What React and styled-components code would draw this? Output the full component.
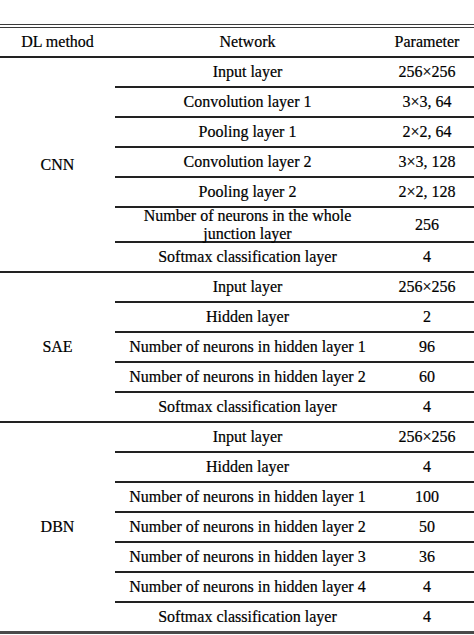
import React from 'react'
import styled, { createGlobalStyle } from 'styled-components'

const GlobalStyle = createGlobalStyle`
  body {
    margin: 0;
    background: #fff;
    font-family: "Liberation Serif", "Times New Roman", serif;
    color: #000;
  }
`

const Table = styled.div`
  width: 474px;
  margin-top: 24px;
  border-top: 4px double #3a3a3a;
  font-size: 16px;
  -webkit-text-stroke: 0.2px #000;
`

const HeaderRow = styled.div`
  display: flex;
  height: 28px;
  border-bottom: 2px solid #222;
`

const Cell = styled.div`
  display: flex;
  align-items: center;
  justify-content: center;
  text-align: center;
  line-height: 18px;
  width: ${props => props.w}px;
  flex-shrink: 0;
`

const Section = styled.div`
  display: flex;
  border-bottom: ${props => props.last ? '3px solid #4a4a4a' : '2px solid #222'};
`

const Method = styled(Cell)`
  width: 115px;
`

const Rows = styled.div`
  display: flex;
  flex-direction: column;
  flex: 1;
`

const Row = styled.div`
  display: flex;
  height: ${props => props.tall ? 33 : 28}px;
  border-bottom: 2px solid #222;
  &:last-child {
    border-bottom: none;
  }
`

const sections = [
  {
    name: 'CNN',
    rows: [
      ['Input layer', '256×256'],
      ['Convolution layer 1', '3×3, 64'],
      ['Pooling layer 1', '2×2, 64'],
      ['Convolution layer 2', '3×3, 128'],
      ['Pooling layer 2', '2×2, 128'],
      ['Number of neurons in the whole junction layer', '256', true],
      ['Softmax classification layer', '4'],
    ],
  },
  {
    name: 'SAE',
    rows: [
      ['Input layer', '256×256'],
      ['Hidden layer', '2'],
      ['Number of neurons in hidden layer 1', '96'],
      ['Number of neurons in hidden layer 2', '60'],
      ['Softmax classification layer', '4'],
    ],
  },
  {
    name: 'DBN',
    rows: [
      ['Input layer', '256×256'],
      ['Hidden layer', '4'],
      ['Number of neurons in hidden layer 1', '100'],
      ['Number of neurons in hidden layer 2', '50'],
      ['Number of neurons in hidden layer 3', '36'],
      ['Number of neurons in hidden layer 4', '4'],
      ['Softmax classification layer', '4'],
    ],
  },
]

function App() {
  return (
    <>
      <GlobalStyle />
      <Table>
        <HeaderRow>
          <Cell w={115}>DL method</Cell>
          <Cell w={265}>Network</Cell>
          <Cell w={94}>Parameter</Cell>
        </HeaderRow>
        {sections.map((s, i) => (
          <Section key={s.name} last={i === sections.length - 1}>
            <Method>{s.name}</Method>
            <Rows>
              {s.rows.map(([net, param, tall], j) => (
                <Row key={j} tall={tall}>
                  <Cell w={265}>{tall ? <span>Number of neurons in the whole<br />junction layer</span> : net}</Cell>
                  <Cell w={94}>{param}</Cell>
                </Row>
              ))}
            </Rows>
          </Section>
        ))}
      </Table>
    </>
  )
}

export default App
